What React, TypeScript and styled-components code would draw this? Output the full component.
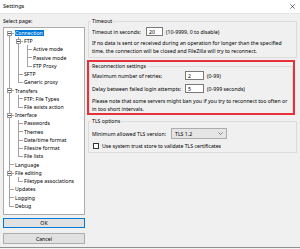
import React from 'react';
import styled, { createGlobalStyle } from 'styled-components';

const Global = createGlobalStyle`
  html, body { margin: 0; padding: 0; background: #f0f0f0; }
  body {
    font-family: "Noto Sans", "Liberation Sans", sans-serif;
    font-size: 5.2px;
    color: #000;
  }
  * { box-sizing: border-box; }
`;

const Window = styled.div`
  width: 300px;
  height: 249px;
  display: flex;
  flex-direction: column;
  overflow: hidden;
  background: #f0f0f0;
`;

const TitleBar = styled.div`
  height: 14px;
  flex: none;
  background: #fff;
  border-bottom: 1px solid #e6e6e6;
  display: flex;
  align-items: center;
  justify-content: space-between;
  padding: 0 5px 1px 3px;
`;

const Title = styled.span`
  font-size: 5.6px;
  line-height: 8px;
`;

const Close = styled.svg`
  width: 5px;
  height: 5px;
  display: block;
`;

const Body = styled.div`
  flex: 1;
  display: flex;
  min-height: 0;
`;

const LeftCol = styled.div`
  flex: none;
  width: 85px;
  padding-left: 3px;
  display: flex;
  flex-direction: column;
`;

const Caption = styled.div`
  height: 13px;
  padding-top: 3px;
  line-height: 8px;
`;

const Tree = styled.div`
  height: 188px;
  background: #fff;
  border: 1px solid #ababab;
  padding: 1px 0 0 1px;
  overflow: hidden;
`;

const Row = styled.div`
  height: 8.24px;
  display: flex;
  align-items: stretch;
  white-space: nowrap;
`;

type GuideKind = 'pipe' | 'tee' | 'elbow' | 'first' | 'blank';

const vLine = (kind: GuideKind) => {
  const c = '#a3a3a3';
  if (kind === 'pipe' || kind === 'tee')
    return `linear-gradient(${c},${c}) 4px 0 / 1px 100% no-repeat, `;
  if (kind === 'elbow')
    return `linear-gradient(${c},${c}) 4px 0 / 1px 50% no-repeat, `;
  if (kind === 'first')
    return `linear-gradient(${c},${c}) 4px 100% / 1px 50% no-repeat, `;
  return '';
};

const Guide = styled.span<{ $kind: GuideKind; $own: boolean }>`
  flex: none;
  width: 9px;
  display: flex;
  align-items: center;
  background: ${(p) =>
    vLine(p.$kind) +
    (p.$own ? `linear-gradient(#a3a3a3,#a3a3a3) 4px 50% / 5px 1px no-repeat, ` : '') +
    'transparent'};
`;

const Expander = styled.span`
  width: 5px;
  height: 5px;
  margin-left: 2px;
  border: 1px solid #9a9a9a;
  background: #fff;
  display: flex;
  align-items: center;
  justify-content: center;
  &::before {
    content: '';
    width: 3px;
    height: 1px;
    background: #555;
  }
`;

const Label = styled.span<{ $selected?: boolean }>`
  margin-left: 1px;
  padding: 0 1px 0 0;
  align-self: center;
  line-height: 6.5px;
  background: ${(p) => (p.$selected ? '#0078d7' : 'transparent')};
  color: ${(p) => (p.$selected ? '#fff' : '#000')};
`;

const Button = styled.div<{ $default?: boolean; $gap: number; $h: number }>`
  margin-top: ${(p) => p.$gap}px;
  height: ${(p) => p.$h}px;
  width: 82px;
  background: #e1e1e1;
  border: 1px solid ${(p) => (p.$default ? '#0078d7' : '#adadad')};
  display: flex;
  align-items: center;
  justify-content: center;
  line-height: 8px;
`;

const RightCol = styled.div`
  flex: 1;
  padding: 3px 3px 0 2px;
  display: flex;
  flex-direction: column;
`;

const Group = styled.fieldset<{ $gap?: number }>`
  margin: ${(p) => p.$gap ?? 0}px 0 0 1px;
  padding: 0 3px 2px 3px;
  border: 1px solid #dcdcdc;
  min-width: 0;
`;

const Legend = styled.legend`
  padding: 0 1px;
  margin-left: -1px;
  line-height: 8px;
`;

const RedFrame = styled.div`
  margin-top: 2px;
  width: 208px;
  border: 2px solid #e8303a;
`;

const InnerGroup = styled.fieldset`
  margin: 0;
  padding: 0 2px 0 2px;
  border: 1px solid #dcdcdc;
  border-bottom: none;
  min-width: 0;
`;

const FieldRow = styled.div<{ $gap: number; $h: number }>`
  margin-top: ${(p) => p.$gap}px;
  height: ${(p) => p.$h}px;
  display: flex;
  align-items: center;
  white-space: nowrap;
`;

const FieldLabel = styled.span<{ $w: number }>`
  width: ${(p) => p.$w}px;
  flex: none;
`;

const Input = styled.div<{ $w: number }>`
  width: ${(p) => p.$w}px;
  height: 100%;
  background: #fff;
  border: 1px solid #7a7a7a;
  padding-left: 2px;
  display: flex;
  align-items: center;
  flex: none;
`;

const Hint = styled.span`
  margin-left: 3px;
`;

const Para = styled.div<{ $gap: number }>`
  margin-top: ${(p) => p.$gap}px;
  line-height: 8px;
  white-space: nowrap;
`;

const Select = styled.div`
  width: 56px;
  height: 100%;
  background: #e5e5e5;
  border: 1px solid #adadad;
  padding: 0 3px 0 3px;
  display: flex;
  align-items: center;
  justify-content: space-between;
`;

const Chevron = styled.svg`
  width: 5px;
  height: 3px;
  display: block;
`;

const Check = styled.span`
  width: 6px;
  height: 6px;
  margin: 0 3px 0 1px;
  border: 1px solid #333;
  background: #fff;
  flex: none;
`;

const BottomEdge = styled.div`
  flex: none;
  height: 2px;
  border-top: 1px solid #8f8f8f;
  background: #f4f4f4;
`;

interface TreeNode {
  label: string;
  children?: TreeNode[];
}

const tree: TreeNode[] = [
  {
    label: 'Connection',
    children: [
      { label: 'FTP', children: [{ label: 'Active mode' }, { label: 'Passive mode' }, { label: 'FTP Proxy' }] },
      { label: 'SFTP' },
      { label: 'Generic proxy' },
    ],
  },
  { label: 'Transfers', children: [{ label: 'FTP: File Types' }, { label: 'File exists action' }] },
  {
    label: 'Interface',
    children: [
      { label: 'Passwords' },
      { label: 'Themes' },
      { label: 'Date/time format' },
      { label: 'Filesize format' },
      { label: 'File lists' },
    ],
  },
  { label: 'Language' },
  { label: 'File editing', children: [{ label: 'Filetype associations' }] },
  { label: 'Updates' },
  { label: 'Logging' },
  { label: 'Debug' },
];

interface FlatRow {
  label: string;
  guides: GuideKind[];
  expandable: boolean;
}

function flatten(nodes: TreeNode[], ancestors: boolean[], out: FlatRow[], root: boolean) {
  nodes.forEach((n, i) => {
    const last = i === nodes.length - 1;
    const own: GuideKind = root && i === 0 ? 'first' : last ? 'elbow' : 'tee';
    out.push({
      label: n.label,
      guides: [...ancestors.map((a) => (a ? 'pipe' : 'blank') as GuideKind), own],
      expandable: !!n.children,
    });
    if (n.children) flatten(n.children, [...ancestors, !last], out, false);
  });
  return out;
}

const rows = flatten(tree, [], [], true);

export default function App() {
  return (
    <>
      <Global />
      <Window>
        <TitleBar>
          <Title>Settings</Title>
          <Close viewBox="0 0 5 5">
            <path d="M0.3 0.3L4.7 4.7M4.7 0.3L0.3 4.7" stroke="#222" strokeWidth="0.6" />
          </Close>
        </TitleBar>
        <Body>
          <LeftCol>
            <Caption>Select page:</Caption>
            <Tree>
              {rows.map((r, i) => (
                <Row key={i}>
                  {r.guides.map((g, j) => (
                    <Guide key={j} $kind={g} $own={j === r.guides.length - 1}>
                      {j === r.guides.length - 1 && r.expandable && <Expander />}
                    </Guide>
                  ))}
                  <Label $selected={i === 0}>{r.label}</Label>
                </Row>
              ))}
            </Tree>
            <Button $default $gap={3} $h={10}>OK</Button>
            <Button $gap={5} $h={11}>Cancel</Button>
          </LeftCol>
          <RightCol>
            <Group>
              <Legend>Timeout</Legend>
              <FieldRow $gap={2} $h={9}>
                <FieldLabel $w={54}>Timeout in seconds:</FieldLabel>
                <Input $w={17}>20</Input>
                <Hint>(10-9999, 0 to disable)</Hint>
              </FieldRow>
              <Para $gap={3}>
                If no data is sent or received during an operation for longer than the specified
                <br />
                time, the connection will be closed and FileZilla will try to reconnect.
              </Para>
            </Group>
            <RedFrame>
              <InnerGroup>
                <Legend>Reconnection settings</Legend>
                <FieldRow $gap={1} $h={9}>
                  <FieldLabel $w={93}>Maximum number of retries:</FieldLabel>
                  <Input $w={19}>2</Input>
                  <Hint>(0-99)</Hint>
                </FieldRow>
                <FieldRow $gap={4} $h={9}>
                  <FieldLabel $w={93}>Delay between failed login attempts:</FieldLabel>
                  <Input $w={19}>5</Input>
                  <Hint>(0-999 seconds)</Hint>
                </FieldRow>
                <Para $gap={4}>
                  Please note that some servers might ban you if you try to reconnect too often or
                  <br />
                  in too short intervals.
                </Para>
              </InnerGroup>
            </RedFrame>
            <Group $gap={2}>
              <Legend>TLS options</Legend>
              <FieldRow $gap={3} $h={11}>
                <FieldLabel $w={79}>Minimum allowed TLS version:</FieldLabel>
                <Select>
                  <span>TLS 1.2</span>
                  <Chevron viewBox="0 0 5 3">
                    <path d="M0.4 0.4L2.5 2.5L4.6 0.4" fill="none" stroke="#444" strokeWidth="0.6" />
                  </Chevron>
                </Select>
              </FieldRow>
              <FieldRow $gap={3} $h={8}>
                <Check />
                <span>Use system trust store to validate TLS certificates</span>
              </FieldRow>
            </Group>
          </RightCol>
        </Body>
        <BottomEdge />
      </Window>
    </>
  );
}
